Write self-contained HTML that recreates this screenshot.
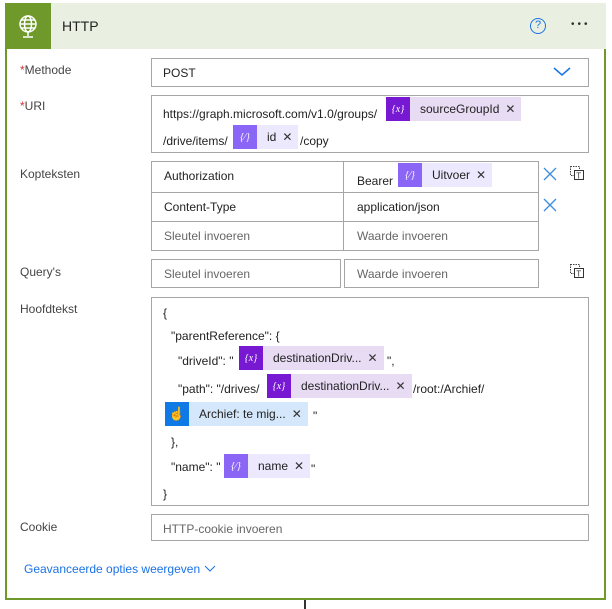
<!DOCTYPE html>
<html><head><meta charset="utf-8"><style>
*{box-sizing:border-box;margin:0;padding:0}
body{width:612px;height:609px;background:#fff;font-family:"Liberation Sans",sans-serif;font-size:12px;color:#222;position:relative;overflow:hidden}
.a{position:absolute}
.card{left:5px;top:3px;width:601px;height:597px;border:2px solid #6f9a2b;border-top-width:1px;background:#fff}
.hdr{left:5px;top:3px;width:601px;height:46px;background:#e9efe1}
.ico{left:5px;top:3px;width:46px;height:46px;background:#6f9a2b}
.lbl{color:#444;font-size:12px}
.req{color:#d13438}
.box{border:1px solid #a6a6a6;background:#fff}
.t{white-space:nowrap}
.ph{color:#666}
.tok{position:absolute;height:24px;display:flex;align-items:center;white-space:nowrap}
.ti{width:24px;height:24px;display:flex;align-items:center;justify-content:center;color:#fff;font-size:10px;font-style:italic;font-family:"Liberation Serif",serif}
.tl{padding:0 6px 0 10px;height:24px;display:flex;align-items:center}
.x{margin-left:6px;font-size:12px;color:#333}
</style></head><body>
<div class="a card"></div>
<div class="a hdr"></div>
<div class="a ico"><svg width="46" height="46" viewBox="0 0 46 46"><g fill="none" stroke="#fff" stroke-width="1.5"><circle cx="23" cy="21" r="8"/><ellipse cx="23" cy="21" rx="3.5" ry="8"/><line x1="15" y1="21" x2="31" y2="21"/><line x1="16" y1="17" x2="30" y2="17"/><line x1="16" y1="25" x2="30" y2="25"/><line x1="23" y1="29" x2="23" y2="33"/><line x1="18" y1="34" x2="28" y2="34"/></g></svg></div>
<div class="a t" style="left:62px;top:18px;font-size:14px;color:#222">HTTP</div>
<div class="a" style="left:530px;top:18px;width:16px;height:16px;border:1.5px solid #1a73e8;border-radius:50%;color:#1a73e8;font-size:11px;text-align:center;line-height:13px">?</div>
<div class="a" style="left:571px;top:19px;font-size:10px;letter-spacing:3px;color:#333">•••</div>

<div class="a lbl" style="left:20px;top:63px"><span class="req">*</span>Methode</div>
<div class="a box" style="left:151px;top:58px;width:438px;height:29px"></div>
<div class="a t" style="left:163px;top:66px">POST</div>
<svg class="a" style="left:553px;top:67px" width="18" height="10"><path d="M1 1L9 8L17 1" fill="none" stroke="#1a73e8" stroke-width="1.5"/></svg>

<div class="a lbl" style="left:20px;top:99px"><span class="req">*</span>URI</div>
<div class="a box" style="left:151px;top:95px;width:438px;height:58px"></div>
<div class="a t" style="left:163px;top:107px">https://graph.microsoft.com/v1.0/groups/</div>
<div class="tok" style="left:386px;top:97px;background:#e8dcf5"><div class="ti" style="background:#7719d2">{x}</div><div class="tl">sourceGroupId<span class="x">✕</span></div></div>
<div class="a t" style="left:163px;top:134px">/drive/items/</div>
<div class="tok" style="left:233px;top:125px;background:#ece8fd"><div class="ti" style="background:#8b65f5">{⁄}</div><div class="tl">id<span class="x">✕</span></div></div>
<div class="a t" style="left:300px;top:134px">/copy</div>

<div class="a lbl" style="left:20px;top:167px">Kopteksten</div>
<div class="a box" style="left:151px;top:161px;width:388px;height:90px"></div>
<div class="a" style="left:343px;top:161px;width:1px;height:90px;background:#a6a6a6"></div>
<div class="a" style="left:151px;top:192px;width:388px;height:1px;background:#a6a6a6"></div>
<div class="a" style="left:151px;top:221px;width:388px;height:1px;background:#a6a6a6"></div>
<div class="a t" style="left:164px;top:169px">Authorization</div>
<div class="a t" style="left:357px;top:174px">Bearer</div>
<div class="tok" style="left:398px;top:163px;background:#ece8fd"><div class="ti" style="background:#8b65f5">{⁄}</div><div class="tl">Uitvoer<span class="x">✕</span></div></div>
<div class="a t" style="left:164px;top:200px">Content-Type</div>
<div class="a t" style="left:357px;top:200px">application/json</div>
<div class="a t ph" style="left:164px;top:229px">Sleutel invoeren</div>
<div class="a t ph" style="left:357px;top:229px">Waarde invoeren</div>
<svg class="a" style="left:543px;top:167px" width="14" height="14"><path d="M1 1L13 13M13 1L1 13" stroke="#3b8de0" stroke-width="1.3"/></svg>
<svg class="a" style="left:543px;top:198px" width="14" height="14"><path d="M1 1L13 13M13 1L1 13" stroke="#3b8de0" stroke-width="1.3"/></svg>
<svg class="a" style="left:569px;top:165px" width="16" height="16"><rect x="1.5" y="1.5" width="9" height="9" fill="none" stroke="#444" stroke-dasharray="1.5 1"/><rect x="5.5" y="5.5" width="9" height="9" fill="#fff" stroke="#333"/><text x="7.3" y="13.3" font-size="8" font-family="Liberation Sans" fill="#333">T</text></svg>

<div class="a lbl" style="left:20px;top:265px">Query's</div>
<div class="a box" style="left:151px;top:259px;width:190px;height:29px"></div>
<div class="a box" style="left:344px;top:259px;width:195px;height:29px"></div>
<div class="a t ph" style="left:164px;top:267px">Sleutel invoeren</div>
<div class="a t ph" style="left:357px;top:267px">Waarde invoeren</div>
<svg class="a" style="left:569px;top:263px" width="16" height="16"><rect x="1.5" y="1.5" width="9" height="9" fill="none" stroke="#444" stroke-dasharray="1.5 1"/><rect x="5.5" y="5.5" width="9" height="9" fill="#fff" stroke="#333"/><text x="7.3" y="13.3" font-size="8" font-family="Liberation Sans" fill="#333">T</text></svg>

<div class="a lbl" style="left:20px;top:302px">Hoofdtekst</div>
<div class="a box" style="left:151px;top:297px;width:438px;height:209px"></div>
<div class="a t" style="left:163px;top:306px">{</div>
<div class="a t" style="left:171px;top:329px">"parentReference": {</div>
<div class="a t" style="left:178px;top:354px">"driveId": "</div>
<div class="tok" style="left:239px;top:346px;background:#e8dcf5"><div class="ti" style="background:#7719d2">{x}</div><div class="tl">destinationDriv...<span class="x">✕</span></div></div>
<div class="a t" style="left:387px;top:354px">",</div>
<div class="a t" style="left:178px;top:382px">"path": "/drives/</div>
<div class="tok" style="left:267px;top:374px;background:#e8dcf5"><div class="ti" style="background:#7719d2">{x}</div><div class="tl">destinationDriv...<span class="x">✕</span></div></div>
<div class="a t" style="left:413px;top:382px">/root:/Archief/</div>
<div class="tok" style="left:165px;top:402px;background:#d4e7fb"><div class="ti" style="background:#0f7ae5;font-style:normal;font-size:13px">☝</div><div class="tl">Archief: te mig...<span class="x">✕</span></div></div>
<div class="a t" style="left:313px;top:409px">"</div>
<div class="a t" style="left:171px;top:435px">},</div>
<div class="a t" style="left:171px;top:460px">"name": "</div>
<div class="tok" style="left:224px;top:454px;background:#ece8fd"><div class="ti" style="background:#8b65f5">{⁄}</div><div class="tl">name<span class="x">✕</span></div></div>
<div class="a t" style="left:311px;top:462px">"</div>
<div class="a t" style="left:163px;top:487px">}</div>

<div class="a lbl" style="left:20px;top:520px">Cookie</div>
<div class="a box" style="left:151px;top:514px;width:438px;height:27px"></div>
<div class="a t ph" style="left:163px;top:522px">HTTP-cookie invoeren</div>

<div class="a t" style="left:24px;top:562px;color:#1a73e8">Geavanceerde opties weergeven</div>
<svg class="a" style="left:204px;top:565px" width="12" height="8"><path d="M1 1L6 6L11 1" fill="none" stroke="#1a73e8" stroke-width="1"/></svg>
<div class="a" style="left:304px;top:600px;width:2px;height:9px;background:#333"></div>
</body></html>
